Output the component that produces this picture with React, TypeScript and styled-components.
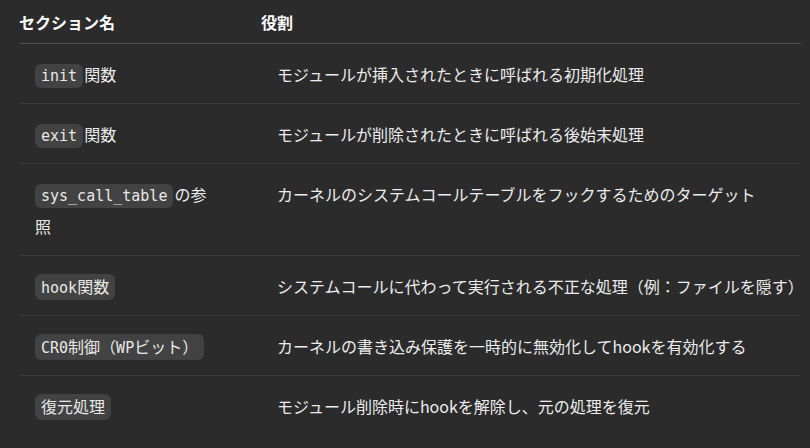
import React from 'react';
import styled, { createGlobalStyle } from 'styled-components';

const GlobalStyle = createGlobalStyle`
  html, body {
    margin: 0;
    padding: 0;
    background: #2b2b2b;
  }
  body {
    font-family: "Noto Sans CJK JP", "Noto Sans", sans-serif;
    color: #ececec;
  }
`;

const Page = styled.div`
  padding: 0 9px 0 19px;
`;

const Table = styled.div`
  display: flex;
  flex-direction: column;
  font-size: 16px;
`;

const HeadRow = styled.div`
  display: grid;
  grid-template-columns: 242px 1fr;
  border-bottom: 1px solid #4e4e4e;
`;

const HeadCell = styled.div`
  padding: 8px 0 7px 0;
  line-height: 28px;
  font-weight: 700;
  color: #ffffff;
`;

const Row = styled.div<{ $last?: boolean }>`
  display: grid;
  grid-template-columns: 242px 1fr;
  border-bottom: ${(p) => (p.$last ? 'none' : '1px solid #3b3b3b')};
`;

const NameCell = styled.div`
  padding: 14px 46px 13px 16px;
  line-height: 32px;
`;

const RoleCell = styled.div`
  padding: 15px 0 14px 16px;
  line-height: 30px;
  white-space: nowrap;
`;

const Code = styled.code`
  display: inline-block;
  padding: 3px 6px;
  margin-right: 1px;
  line-height: 18px;
  font-family: "DejaVu Sans Mono", "Liberation Mono", "Noto Sans CJK JP", monospace;
  font-size: 15px;
  color: #e8e8e8;
  background: #424242;
  border-radius: 6px;
  vertical-align: baseline;
`;

const Wide = styled.span`
  font-family: "Noto Sans CJK JP", sans-serif;
  font-size: 16px;
  line-height: 18px;
`;

type Item = { name: React.ReactNode; role: string };

function getRows(): Item[] {
  return [
    { name: <><Code>init</Code>関数</>, role: 'モジュールが挿入されたときに呼ばれる初期化処理' },
    { name: <><Code>exit</Code>関数</>, role: 'モジュールが削除されたときに呼ばれる後始末処理' },
    { name: <><Code>sys_call_table</Code>の参照</>, role: 'カーネルのシステムコールテーブルをフックするためのターゲット' },
    { name: <Code>hook<Wide>関数</Wide></Code>, role: 'システムコールに代わって実行される不正な処理（例：ファイルを隠す）' },
    { name: <Code>CR0<Wide>制御（</Wide>WP<Wide>ビット）</Wide></Code>, role: 'カーネルの書き込み保護を一時的に無効化してhookを有効化する' },
    { name: <Code><Wide>復元処理</Wide></Code>, role: 'モジュール削除時にhookを解除し、元の処理を復元' },
  ];
}

function App() {
  const rows = getRows();
  return (
    <>
      <GlobalStyle />
      <Page>
        <Table>
          <HeadRow>
            <HeadCell>セクション名</HeadCell>
            <HeadCell>役割</HeadCell>
          </HeadRow>
          {rows.map((r, i) => (
            <Row key={i} $last={i === rows.length - 1}>
              <NameCell>{r.name}</NameCell>
              <RoleCell>{r.role}</RoleCell>
            </Row>
          ))}
        </Table>
      </Page>
    </>
  );
}

export default App;
